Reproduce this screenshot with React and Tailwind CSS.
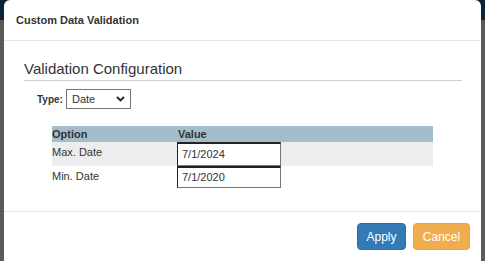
import React from "react";

const rows = [
  { option: "Max. Date", value: "7/1/2024", shade: true },
  { option: "Min. Date", value: "7/1/2020", shade: false },
];

const App = () => {
  return (
    <div
      className="relative w-[485px] h-[261px] overflow-hidden bg-[#5a5a5a] px-[4px]"
      style={{ fontFamily: '"Liberation Sans", Arial, sans-serif' }}
    >
      <div className="absolute left-0 top-0 w-full h-[20px] bg-[#0c2339]" />
      <div className="relative h-[270px] bg-white rounded-t-[6px] text-[#333]">
        {/* header */}
        <div className="h-[41px] flex items-center px-[12px] border-b border-[#e5e5e5]">
          <h4 className="text-[11px] font-bold text-[#333]">Custom Data Validation</h4>
        </div>

        {/* body */}
        <div className="h-[170px] pt-[18px] px-[20px] pr-[19px]">
          <div className="text-[15px] leading-[19px] text-[#333] border-b border-[#cfcfcf] pb-[2px]">
            Validation Configuration
          </div>
          <div className="flex items-center mt-[8px] ml-[13px]">
            <span className="text-[10px] font-bold mr-[3px]">Type:</span>
            <div className="w-[65px] h-[20px] border border-[#767676] flex items-center justify-between pl-[5px] pr-[5px] text-[11px]">
              <span>Date</span>
              <svg width="9" height="6" viewBox="0 0 9 6">
                <path d="M1 1l3.5 3.5L8 1" fill="none" stroke="#222" strokeWidth="1.8" />
              </svg>
            </div>
          </div>
          <div className="mt-[17px] ml-[28px] w-[381px] text-[11px]">
            <div className="flex h-[16px] bg-[#a5bccb] font-bold items-center">
              <div className="w-[126px]">Option</div>
              <div>Value</div>
            </div>
            {rows.map((r) => (
              <div key={r.option} className={r.shade ? "flex bg-[#ededed]" : "flex"}>
                <div className="w-[125px] pt-[2px]">{r.option}</div>
                <div
                  className={
                    r.shade
                      ? "w-[104px] h-[24px] border border-[#767676] border-t-[#222] border-l-[#222] border-t-2 bg-white flex items-center pl-[4px]"
                      : "w-[104px] h-[22px] border border-[#767676] border-t-[#222] border-l-[#222] border-t-2 bg-white flex items-center pl-[4px]"
                  }
                >
                  {r.value}
                </div>
              </div>
            ))}
          </div>
        </div>

        {/* footer */}
        <div className="border-t border-[#e5e5e5] flex justify-end gap-[7px] pt-[11px] pr-[11px]">
          <button className="w-[49px] h-[27px] rounded-[4px] bg-[#337ab7] border border-[#2e6da4] text-white text-[12px]">
            Apply
          </button>
          <button className="w-[57px] h-[27px] rounded-[4px] bg-[#f0ad4e] border border-[#eea236] text-white text-[12px]">
            Cancel
          </button>
        </div>
      </div>
    </div>
  );
};

export default App;
